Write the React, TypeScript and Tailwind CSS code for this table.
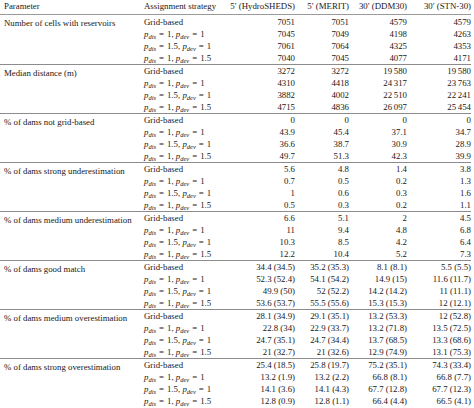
import React from "react";

interface Group {
  label: string;
  values: string[][];
}

const groups: Group[] = [
  {
    label: "Number of cells with reservoirs",
    values: [
      ["7051", "7051", "4579", "4579"],
      ["7045", "7049", "4198", "4263"],
      ["7061", "7064", "4325", "4353"],
      ["7040", "7045", "4077", "4171"],
    ],
  },
  {
    label: "Median distance (m)",
    values: [
      ["3272", "3272", "19\u2009580", "19\u2009580"],
      ["4310", "4418", "24\u2009317", "23\u2009763"],
      ["3882", "4002", "22\u2009510", "22\u2009241"],
      ["4715", "4836", "26\u2009097", "25\u2009454"],
    ],
  },
  {
    label: "% of dams not grid-based",
    values: [
      ["0", "0", "0", "0"],
      ["43.9", "45.4", "37.1", "34.7"],
      ["36.6", "38.7", "30.9", "28.9"],
      ["49.7", "51.3", "42.3", "39.9"],
    ],
  },
  {
    label: "% of dams strong underestimation",
    values: [
      ["5.6", "4.8", "1.4", "3.8"],
      ["0.7", "0.5", "0.2", "1.3"],
      ["1", "0.6", "0.3", "1.6"],
      ["0.5", "0.3", "0.2", "1.1"],
    ],
  },
  {
    label: "% of dams medium underestimation",
    values: [
      ["6.6", "5.1", "2", "4.5"],
      ["11", "9.4", "4.8", "6.8"],
      ["10.3", "8.5", "4.2", "6.4"],
      ["12.2", "10.4", "5.2", "7.3"],
    ],
  },
  {
    label: "% of dams good match",
    values: [
      ["34.4 (34.5)", "35.2 (35.3)", "8.1 (8.1)", "5.5 (5.5)"],
      ["52.3 (52.4)", "54.1 (54.2)", "14.9 (15)", "11.6 (11.7)"],
      ["49.9 (50)", "52 (52.2)", "14.2 (14.2)", "11 (11.1)"],
      ["53.6 (53.7)", "55.5 (55.6)", "15.3 (15.3)", "12 (12.1)"],
    ],
  },
  {
    label: "% of dams medium overestimation",
    values: [
      ["28.1 (34.9)", "29.1 (35.1)", "13.2 (53.3)", "12 (52.8)"],
      ["22.8 (34)", "22.9 (33.7)", "13.2 (71.8)", "13.5 (72.5)"],
      ["24.7 (35.1)", "24.7 (34.4)", "13.7 (68.5)", "13.3 (68.6)"],
      ["21 (32.7)", "21 (32.6)", "12.9 (74.9)", "13.1 (75.3)"],
    ],
  },
  {
    label: "% of dams strong overestimation",
    values: [
      ["25.4 (18.5)", "25.8 (19.7)", "75.2 (35.1)", "74.3 (33.4)"],
      ["13.2 (1.9)", "13.2 (2.2)", "66.8 (8.1)", "66.8 (7.7)"],
      ["14.1 (3.6)", "14.1 (4.3)", "67.7 (12.8)", "67.7 (12.3)"],
      ["12.8 (0.9)", "12.8 (1.1)", "66.4 (4.4)", "66.5 (4.1)"],
    ],
  },
];

function Strategy({ dis, dev }: { dis: string; dev: string }) {
  return (
    <span>
      <i>p</i>
      <span className="relative top-[2px] italic text-[6.5px] leading-none">dis</span>
      <span className="mx-[3px]">=</span>
      {dis}, <i>p</i>
      <span className="relative top-[2px] italic text-[6.5px] leading-none">dev</span>
      <span className="mx-[3px]">=</span>
      {dev}
    </span>
  );
}

const strategies = [
  <span>Grid-based</span>,
  <Strategy dis="1" dev="1" />,
  <Strategy dis="1.5" dev="1" />,
  <Strategy dis="1" dev="1.5" />,
];

export default function App() {
  return (
    <div className="w-[474px] h-[408px] bg-white overflow-hidden text-[#1a1718] text-[8.8px] leading-[12px] [font-family:'Liberation_Serif',serif]">
      <table className="table-fixed border-collapse w-[471px]">
        <colgroup>
          <col className="w-[144px]" />
          <col className="w-[84px]" />
          <col className="w-[67px]" />
          <col className="w-[54px]" />
          <col className="w-[58px]" />
          <col className="w-[64px]" />
        </colgroup>
        <thead>
          <tr className="h-[14px] border-b border-[#9a9a9a]">
            <th className="font-normal text-left pl-[4px] align-top p-0 whitespace-nowrap">Parameter</th>
            <th className="font-normal text-left align-top p-0 whitespace-nowrap">Assignment strategy</th>
            <th className="font-normal text-right align-top p-0 whitespace-nowrap">5′ (HydroSHEDS)</th>
            <th className="font-normal text-right align-top p-0 whitespace-nowrap">5′ (MERIT)</th>
            <th className="font-normal text-right align-top p-0 whitespace-nowrap">30′ (DDM30)</th>
            <th className="font-normal text-right align-top p-0 whitespace-nowrap">30′ (STN-30)</th>
          </tr>
        </thead>
        {groups.map((g, gi) => (
          <tbody key={g.label} className={gi > 0 ? "border-t border-[#8c8c8c]" : ""}>
            {g.values.map((row, ri) => (
              <tr key={ri} className={gi === 0 && ri === 0 ? "h-[14px] align-bottom" : "h-[12px]"}>
                {ri === 0 ? (
                  <td rowSpan={4} className="align-top pl-[4px] pt-[2px] p-0 whitespace-nowrap">
                    {g.label}
                  </td>
                ) : null}
                <td className="p-0 whitespace-nowrap">{strategies[ri]}</td>
                {row.map((v, vi) => (
                  <td key={vi} className="p-0 text-right whitespace-nowrap">
                    {v}
                  </td>
                ))}
              </tr>
            ))}
          </tbody>
        ))}
      </table>
    </div>
  );
}
